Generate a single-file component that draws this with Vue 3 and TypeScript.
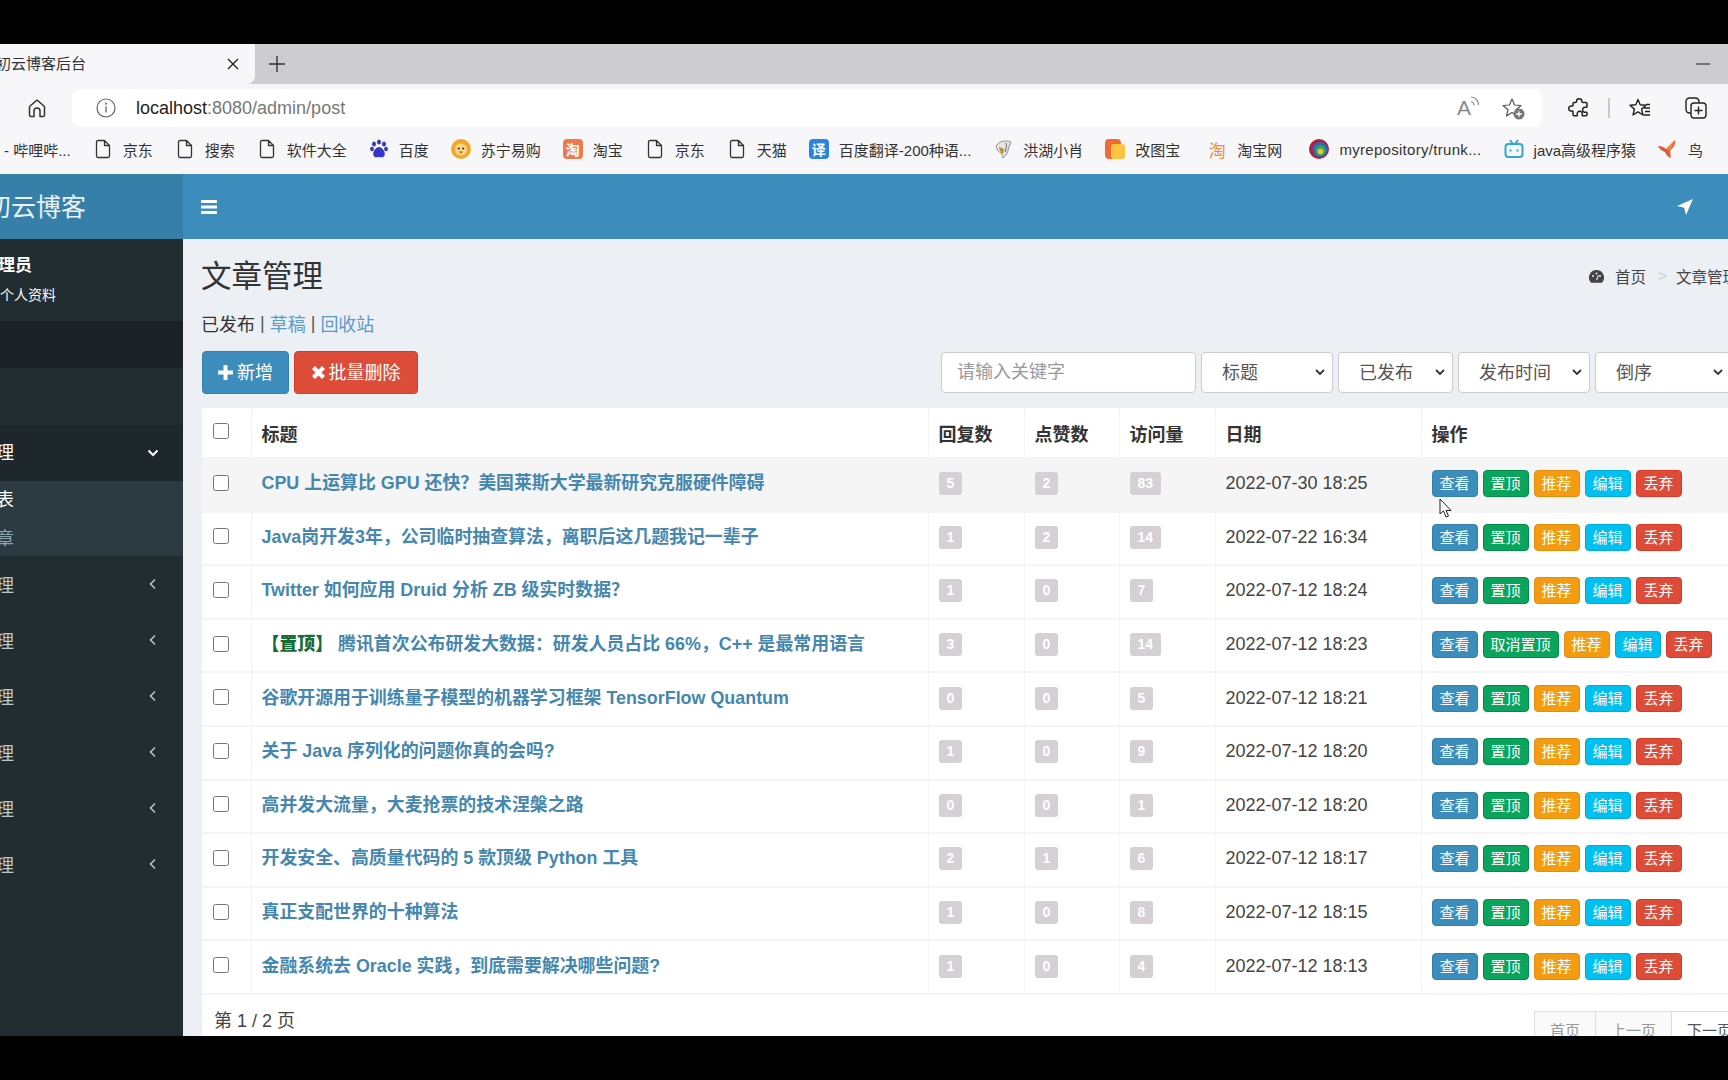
<script setup lang="ts">
type Post = {
  title: string
  pinned?: boolean
  replies: number
  likes: number
  views: number
  date: string
}

const bookmarks = [
  { icon: 'none', text: '- 哔哩哔...' },
  { icon: 'page', text: '京东' },
  { icon: 'page', text: '搜索' },
  { icon: 'page', text: '软件大全' },
  { icon: 'baidu', text: '百度' },
  { icon: 'lion', text: '苏宁易购' },
  { icon: 'taobao', text: '淘宝' },
  { icon: 'page', text: '京东' },
  { icon: 'page', text: '天猫' },
  { icon: 'fanyi', text: '百度翻译-200种语...' },
  { icon: 'hong', text: '洪湖小肖' },
  { icon: 'gaitu', text: '改图宝' },
  { icon: 'tao2', text: '淘宝网' },
  { icon: 'repo', text: 'myrepository/trunk...' },
  { icon: 'bili', text: 'java高级程序猿' },
  { icon: 'bird', text: '鸟' },
]

const menus = ['管理', '管理', '管理', '管理', '管理', '管理']

const posts: Post[] = [
  { title: 'CPU 上运算比 GPU 还快？美国莱斯大学最新研究克服硬件障碍', replies: 5, likes: 2, views: 83, date: '2022-07-30 18:25' },
  { title: 'Java岗开发3年，公司临时抽查算法，离职后这几题我记一辈子', replies: 1, likes: 2, views: 14, date: '2022-07-22 16:34' },
  { title: 'Twitter 如何应用 Druid 分析 ZB 级实时数据？', replies: 1, likes: 0, views: 7, date: '2022-07-12 18:24' },
  { title: '腾讯首次公布研发大数据：研发人员占比 66%，C++ 是最常用语言', pinned: true, replies: 3, likes: 0, views: 14, date: '2022-07-12 18:23' },
  { title: '谷歌开源用于训练量子模型的机器学习框架 TensorFlow Quantum', replies: 0, likes: 0, views: 5, date: '2022-07-12 18:21' },
  { title: '关于 Java 序列化的问题你真的会吗?', replies: 1, likes: 0, views: 9, date: '2022-07-12 18:20' },
  { title: '高并发大流量，大麦抢票的技术涅槃之路', replies: 0, likes: 0, views: 1, date: '2022-07-12 18:20' },
  { title: '开发安全、高质量代码的 5 款顶级 Python 工具', replies: 2, likes: 1, views: 6, date: '2022-07-12 18:17' },
  { title: '真正支配世界的十种算法', replies: 1, likes: 0, views: 8, date: '2022-07-12 18:15' },
  { title: '金融系统去 Oracle 实践，到底需要解决哪些问题?', replies: 1, likes: 0, views: 4, date: '2022-07-12 18:13' },
]
</script>

<template>
  <div class="screen">
    <div class="window">
      <div class="tabstrip">
        <div class="tab">
          <span class="tab-title">初云博客后台</span>
          <svg class="tab-close" width="14" height="14" viewBox="0 0 14 14"><path d="M2 2l10 10M12 2L2 12" stroke="#222" stroke-width="1.4" /></svg>
        </div>
        <svg class="tab-plus" width="20" height="20" viewBox="0 0 20 20"><path d="M10 2v16M2 10h16" stroke="#333" stroke-width="1.4" /></svg>
        <svg class="win-min" width="14" height="14" viewBox="0 0 14 14"><path d="M0 7h14" stroke="#444" stroke-width="1.3" /></svg>
      </div>

      <div class="toolbar">
        <svg class="tool-home" width="24" height="24" viewBox="0 0 24 24" fill="none" stroke="#333" stroke-width="1.5"><path d="M4.5 10.5 12 4l7.5 6.5V19a1.5 1.5 0 0 1-1.5 1.5h-3V15a3 3 0 0 0-6 0v5.500H6A1.500 1.500 0 0 1 4.500 19z" stroke-linejoin="round" /></svg>
        <div class="address">
          <svg width="22" height="22" viewBox="0 0 22 22" fill="none"><circle cx="11" cy="11" r="9" stroke="#666" stroke-width="1.2" /><path d="M11 9.500v6" stroke="#666" stroke-width="1.3" /><circle cx="11" cy="6.800" r="1" fill="#666" /></svg>
          <span class="url"><b>localhost</b>:8080/admin/post</span>
          <span class="address-gap"></span>
          <span class="read-aloud">A<svg width="10" height="14" viewBox="0 0 10 14" fill="none" stroke="#888" stroke-width="1.200"><path d="M0 6c2 0 3 1.500 3 3.500M0 1c4.500 0 7.500 3.500 7.500 8" /></svg></span>
          <svg class="addr-star" width="24" height="24" viewBox="0 0 24 24" fill="none"><path d="M11 3l2.500 6 6.500.5-5 4.200 1.500 6.300-5.500-3.400L5.500 20 7 13.700 2 9.500 8.500 9z" stroke="#555" stroke-width="1.200" stroke-linejoin="round" /><circle cx="18" cy="18" r="5.500" fill="#777" /><path d="M18 15.200v5.600M15.200 18h5.600" stroke="#fff" stroke-width="1.300" /></svg>
        </div>
        <svg class="tool-puzzle" width="24" height="24" viewBox="0 0 24 24" fill="none"><path d="M9.500 5.500a2.700 2.700 0 0 1 5.400 0c0 .6.400 1 1 1H19a1 1 0 0 1 1 1v3c0 .6-.5 1-1 .8a2.600 2.600 0 1 0 0 4.900c.5-.2 1 .2 1 .8v1.800a1 1 0 0 1-1 1h-3c-.6 0-1-.5-.8-1a2.600 2.600 0 1 0-4.900 0c.2.500-.2 1-.8 1H7a1 1 0 0 1-1-1v-3c0-.6-.5-1-1-.8a2.600 2.600 0 1 1 0-5c.5.200 1-.2 1-.8V7.500a1 1 0 0 1 1-1h1.500c.6 0 1-.4 1-1z" stroke="#222" stroke-width="1.500" /></svg>
        <span class="tool-divider"></span>
        <svg class="tool-fav" width="24" height="24" viewBox="0 0 24 24" fill="none" stroke="#222" stroke-width="1.400"><path d="M10 3.500l2.200 5.300 5.800.5-4.400 3.800 1.400 5.900-5-3.100-5 3.100 1.400-5.900-4.400-3.800 5.800-.5z" stroke-linejoin="round" /><path d="M16 12h6M17 15.500h5M15.500 19h6.500M18 8.500h4" /></svg>
        <svg class="tool-coll" width="24" height="24" viewBox="0 0 24 24" fill="none" stroke="#222" stroke-width="1.400"><rect x="7" y="7" width="15" height="15" rx="3" /><path d="M7 17H5.500A3.500 3.500 0 0 1 2 13.500v-8A3.500 3.500 0 0 1 5.500 2h6A3.500 3.500 0 0 1 15 5.500V7M14.500 10.500v8M10.500 14.500h8" /></svg>
      </div>

      <div class="bookmarks">
        <div v-for="(b, i) in bookmarks" :key="i" class="bookmark" :class="'item-' + b.icon">
          <svg v-if="b.icon === 'page'" class="bm-icon" width="20" height="20" viewBox="0 0 20 20" fill="none" stroke="#333" stroke-width="1.300"><path d="M3.500 3A1.500 1.500 0 0 1 5 1.500h6.500l5 5V17a1.500 1.500 0 0 1-1.500 1.500H5A1.500 1.500 0 0 1 3.500 17zM11.500 1.500V6.500h5" stroke-linejoin="round" /></svg>
          <svg v-else-if="b.icon === 'baidu'" class="bm-icon" width="20" height="20" viewBox="0 0 20 20" fill="#3337c6"><ellipse cx="5" cy="5" rx="2" ry="2.600" /><ellipse cx="10" cy="3" rx="2" ry="2.600" /><ellipse cx="15" cy="5" rx="2" ry="2.600" /><ellipse cx="3" cy="10" rx="1.900" ry="2.300" /><ellipse cx="17" cy="10" rx="1.900" ry="2.300" /><path d="M10 8c-3 0-5.800 4-5.800 7 0 2.500 2 3.500 3.500 3.300 1-.1 1.600-.4 2.300-.4s1.300.3 2.300.4c1.500.2 3.500-.8 3.500-3.300 0-3-2.800-7-5.800-7z" /></svg>
          <svg v-else-if="b.icon === 'lion'" class="bm-icon" width="20" height="20" viewBox="0 0 20 20"><circle cx="10" cy="10" r="10" fill="#f2a92a" /><circle cx="10" cy="10.500" r="6" fill="#f9d58a" /><circle cx="7.800" cy="9.500" r="1.100" fill="#4a2c10" /><circle cx="12.200" cy="9.500" r="1.100" fill="#4a2c10" /><path d="M8 12.500h4l-2 2z" fill="#a9521c" /></svg>
          <span v-else-if="b.icon === 'taobao'" class="bm-icon bm-tao">淘</span>
          <span v-else-if="b.icon === 'fanyi'" class="bm-icon bm-fanyi">译</span>
          <svg v-else-if="b.icon === 'hong'" class="bm-icon" width="20" height="20" viewBox="0 0 20 20"><path d="M3 7c2-3 5-5 9-5 2 0 4 0 6 1-1 3-3 6-3 9-1 3-3 5-5 7-1-2-1-3-1-5-3 0-5-3-6-7z" fill="#e7e5e0" stroke="#777" stroke-width=".8" /><path d="M6 8l5 2-1 5-3-3z" fill="#b99127" /><path d="M13 4c1 3 0 6-1 9" stroke="#666" stroke-width="1" fill="none" /></svg>
          <svg v-else-if="b.icon === 'gaitu'" class="bm-icon" width="20" height="20" viewBox="0 0 20 20"><rect y="0" width="16" height="20" rx="4" fill="#ee6c33" /><rect x="6" y="5" width="14" height="15" rx="3" fill="#fbc440" /></svg>
          <span v-else-if="b.icon === 'tao2'" class="bm-icon bm-tao2">淘</span>
          <svg v-else-if="b.icon === 'repo'" class="bm-icon" width="20" height="20" viewBox="0 0 20 20"><circle cx="10" cy="10" r="10" fill="#b21f3d" /><circle cx="11" cy="10.500" r="7.500" fill="#2a6db8" /><circle cx="11.500" cy="11.500" r="5.200" fill="#3aa655" /><circle cx="11.500" cy="12.500" r="2.800" fill="#e8c93c" /></svg>
          <svg v-else-if="b.icon === 'bili'" class="bm-icon" width="20" height="20" viewBox="0 0 20 20" fill="none" stroke="#2fa9cf" stroke-width="2"><rect x="1.500" y="5" width="17" height="13" rx="3" /><path d="M6 1l2.500 3.500M14 1l-2.500 3.500" /><path d="M6.500 10.500v2M13.500 10.500v2" /></svg>
          <svg v-else-if="b.icon === 'bird'" class="bm-icon" width="20" height="20" viewBox="0 0 20 20"><path d="M0 7c3 0 6 1 8 3l9-9c1 4-2 8-5 11l1 7c-3-1-5-3-6-6C4 12 1 10 0 7z" fill="#e2583a" /><path d="M8 10l4 2 5-11z" fill="#f08a3c" /></svg>
          <span class="bm-text">{{ b.text }}</span>
        </div>
      </div>

      <div class="app">
        <aside class="sidebar">
          <div class="logo"><span>初云博客</span></div>
          <div class="user">
            <strong>管理员</strong>
            <span>修改个人资料</span>
          </div>
          <div class="search-band"></div>
          <div class="menu-blank"></div>
          <div class="menu-item active">
            <span class="menu-label">管理</span>
            <svg width="12" height="12" viewBox="0 0 12 12" fill="none" stroke="#fff" stroke-width="2"><path d="M1.500 3.500 6 8l4.500-4.500" /></svg>
          </div>
          <div class="submenu">
            <div class="sub-item on"><span class="menu-label">列表</span></div>
            <div class="sub-item"><span class="menu-label">文章</span></div>
          </div>
          <div v-for="(m, i) in menus" :key="i" class="menu-item">
            <span class="menu-label">{{ m }}</span>
            <svg width="12" height="12" viewBox="0 0 12 12" fill="none" stroke="#b8c7ce" stroke-width="1.500"><path d="M8 1.500 3.500 6 8 10.500" /></svg>
          </div>
        </aside>

        <div class="main">
          <header class="navbar">
            <svg width="16" height="14" viewBox="0 0 16 14" fill="#fff"><rect width="16" height="3" rx=".6" /><rect y="5.500" width="16" height="3" rx=".6" /><rect y="11" width="16" height="3" rx=".6" /></svg>
            <svg class="nav-arrow" width="16" height="16" viewBox="0 0 16 16" fill="#fff"><path d="M16 0 9 16 7.200 8.800 0 7z" /></svg>
          </header>

          <section class="content">
            <div class="page-head">
              <h1>文章管理</h1>
              <div class="crumbs">
                <svg width="15" height="13" viewBox="0 0 15 13"><path d="M7.500 0a7.500 7.500 0 0 0-6 12l.6.800h10.800l.6-.8A7.500 7.500 0 0 0 7.500 0z" fill="#444" /><circle cx="4" cy="6" r="1" fill="#ecf0f5" /><circle cx="7.500" cy="3.500" r="1" fill="#ecf0f5" /><circle cx="11" cy="6" r="1" fill="#ecf0f5" /><path d="M7 10l2-5 .8.300-1.600 5z" fill="#ecf0f5" /></svg>
                <span class="crumb-link">首页</span>
                <span class="crumb-sep">&gt;</span>
                <span class="crumb-link">文章管理</span>
              </div>
            </div>

            <div class="status-tabs">
              <span>已发布</span><i>|</i><a>草稿</a><i>|</i><a>回收站</a>
            </div>

            <div class="actions">
              <div class="action-btns">
                <button class="btn btn-add" type="button">
                  <svg width="15" height="15" viewBox="0 0 15 15" fill="#fff"><path d="M5.500 0h4v5.500H15v4H9.500V15h-4V9.500H0v-4h5.500z" /></svg>
                  新增
                </button>
                <button class="btn btn-del" type="button">
                  <svg width="13" height="13" viewBox="0 0 13 13" fill="#fff"><path d="M3 0l3.500 3.500L10 0l3 3-3.500 3.500L13 10l-3 3-3.500-3.500L3 13l-3-3 3.500-3.500L0 3z" /></svg>
                  批量删除
                </button>
              </div>
              <div class="filters">
                <input class="keyword" type="text" placeholder="请输入关键字" />
                <select class="sel sel-a"><option>标题</option></select>
                <select class="sel sel-b"><option>已发布</option></select>
                <select class="sel sel-c"><option>发布时间</option></select>
                <select class="sel sel-d"><option>倒序</option></select>
              </div>
            </div>

            <div class="panel">
              <table class="posts">
                <colgroup>
                  <col style="width: 49px" />
                  <col style="width: 677px" />
                  <col style="width: 96px" />
                  <col style="width: 95px" />
                  <col style="width: 96px" />
                  <col style="width: 206px" />
                  <col />
                </colgroup>
                <thead>
                  <tr>
                    <th><input class="head-check" type="checkbox" /></th>
                    <th>标题</th>
                    <th>回复数</th>
                    <th>点赞数</th>
                    <th>访问量</th>
                    <th>日期</th>
                    <th>操作</th>
                  </tr>
                </thead>
                <tbody>
                  <tr v-for="(p, i) in posts" :key="i" :class="{ hover: i === 0 }">
                    <td><input type="checkbox" /></td>
                    <td class="title">
                      <b v-if="p.pinned" class="pin">【置顶】</b><a>{{ p.title }}</a>
                    </td>
                    <td><span class="badge">{{ p.replies }}</span></td>
                    <td><span class="badge">{{ p.likes }}</span></td>
                    <td><span class="badge">{{ p.views }}</span></td>
                    <td class="date">{{ p.date }}</td>
                    <td>
                      <div class="ops">
                        <button class="op c-blue" type="button">查看</button>
                        <button class="op c-green" type="button">{{ p.pinned ? '取消置顶' : '置顶' }}</button>
                        <button class="op c-orange" type="button">推荐</button>
                        <button class="op c-cyan" type="button">编辑</button>
                        <button class="op c-red" type="button">丢弃</button>
                      </div>
                    </td>
                  </tr>
                </tbody>
              </table>
              <div class="panel-foot">
                <span class="page-info">第 1 / 2 页</span>
                <div class="pager">
                  <span class="off">首页</span>
                  <span class="off">上一页</span>
                  <span>下一页</span>
                  <span>末页</span>
                </div>
              </div>
            </div>
          </section>
        </div>
      </div>
    </div>

    <svg class="cursor" width="14" height="21" viewBox="0 0 14 21"><path d="M1 1v15l3.500-3.200L7 19l2.500-1-2.500-5.500h5z" fill="#fff" stroke="#222" stroke-width="1" /></svg>
  </div>
</template>

<style>
html,
body {
  margin: 0;
  background: #000;
}
</style>

<style scoped>
.screen {
  position: relative;
  width: 1728px;
  height: 1080px;
  padding: 44px 0;
  box-sizing: border-box;
  background: #000;
  overflow: hidden;
  font-family: "Liberation Sans", "Noto Sans CJK SC", sans-serif;
  color: #333;
}
.window {
  height: 100%;
  display: flex;
  flex-direction: column;
  overflow: hidden;
  background: #f7f6f9;
}

/* browser chrome */
.tabstrip {
  height: 40px;
  flex: none;
  display: flex;
  align-items: center;
  background: #cdccce;
}
.tab {
  width: 255px;
  height: 100%;
  flex: none;
  display: flex;
  align-items: center;
  justify-content: space-between;
  padding-right: 15px;
  box-sizing: border-box;
  background: #f7f6f9;
  border-bottom-right-radius: 8px;
}
.tab-title {
  margin-left: -4px;
  padding-bottom: 4px;
  font-size: 15px;
  color: #333;
}
.tab-plus {
  margin-left: 12px;
}
.win-min {
  margin-left: auto;
  margin-right: 18px;
}
.toolbar {
  height: 48px;
  flex: none;
  display: flex;
  align-items: center;
  padding-left: 25px;
}
.address {
  width: 1470px;
  height: 38px;
  margin-left: 23px;
  padding: 0 17px 0 23px;
  box-sizing: border-box;
  flex: none;
  display: flex;
  align-items: center;
  background: #fff;
  border-radius: 7px;
}
.url {
  margin-left: 19px;
  font-size: 18px;
  color: #777;
}
.url b {
  font-weight: 400;
  color: #222;
}
.address-gap {
  flex: 1;
}
.read-aloud {
  width: 24px;
  margin-right: -2px;
  display: flex;
  align-items: flex-start;
  font-size: 21px;
  color: #888;
}
.addr-star {
  margin-left: 22px;
}
.tool-puzzle {
  margin-left: 25px;
}
.tool-divider {
  width: 2px;
  height: 20px;
  margin-left: 17px;
  background: #c9c9cb;
}
.tool-fav {
  margin-left: 18px;
}
.tool-coll {
  margin-left: 32px;
}
.bookmarks {
  height: 42px;
  flex: none;
  display: flex;
  align-items: center;
  gap: 22px;
  padding: 0 0 8px 4px;
  box-sizing: border-box;
  white-space: nowrap;
}
.bookmark {
  display: flex;
  align-items: center;
  gap: 10px;
  font-size: 15px;
  color: #333;
}
.item-tao2 {
  margin-left: 5px;
}
.item-repo {
  margin-left: 5px;
  letter-spacing: 0.3px;
}
.bm-icon {
  width: 20px;
  height: 20px;
  flex: none;
}
.bm-tao,
.bm-fanyi {
  display: flex;
  align-items: center;
  justify-content: center;
  border-radius: 4px;
  font-size: 14px;
  font-weight: 700;
  color: #fff;
}
.bm-tao {
  background: #ec7a4c;
}
.bm-fanyi {
  background: #2a83e0;
}
.bm-tao2 {
  display: flex;
  align-items: center;
  justify-content: center;
  font-size: 17px;
  color: #f08a3c;
}

/* admin page */
.app {
  flex: 1;
  display: flex;
  min-height: 0;
}
.sidebar {
  width: 183px;
  flex: none;
  overflow: hidden;
  background: #222d32;
  color: #b8c7ce;
}
.logo {
  height: 65px;
  box-sizing: border-box;
  padding-bottom: 4px;
  display: flex;
  align-items: center;
  background: #367fa9;
  color: #eaf3f8;
  font-size: 25px;
}
.logo span {
  margin-left: -14px;
}
.user {
  height: 82px;
  box-sizing: border-box;
  padding-top: 15px;
  display: flex;
  flex-direction: column;
  gap: 8px;
  color: #fff;
  white-space: nowrap;
}
.user strong {
  margin-left: -19px;
  font-size: 17px;
  line-height: 24px;
}
.user span {
  margin-left: -28px;
  font-size: 14px;
  line-height: 18px;
}
.search-band {
  height: 47px;
  background: #1a2226;
}
.menu-blank {
  height: 57px;
}
.menu-item {
  height: 56px;
  display: flex;
  align-items: center;
  justify-content: space-between;
  padding-right: 24px;
  font-size: 18px;
}
.menu-item.active {
  background: #1e282c;
  color: #fff;
}
.menu-item.active .menu-label,
.sub-item.on .menu-label {
  padding-bottom: 4px;
}
.menu-label {
  margin-left: -22px;
  white-space: nowrap;
}
.submenu {
  height: 75px;
  background: #2c3b41;
  color: #8aa4af;
  font-size: 18px;
}
.sub-item {
  height: 37.5px;
  display: flex;
  align-items: center;
}
.sub-item.on {
  color: #fff;
}
.main {
  flex: 1;
  min-width: 0;
  display: flex;
  flex-direction: column;
  background: #ecf0f5;
}
.navbar {
  height: 65px;
  flex: none;
  display: flex;
  align-items: center;
  justify-content: space-between;
  padding: 0 35px 0 18px;
  background: #3c8dbc;
}
.content {
  flex: 1;
  min-height: 0;
  padding: 20px 0 0 19px;
  overflow: hidden;
}
.page-head {
  width: 1536px;
  display: flex;
  align-items: center;
  justify-content: space-between;
}
h1 {
  margin: 0 0 0 -1px;
  font-size: 30.5px;
  font-weight: 400;
  line-height: 34px;
  color: #333;
}
.crumbs {
  display: flex;
  align-items: center;
  font-size: 15.500px;
  color: #444;
  white-space: nowrap;
}
.crumb-link:first-of-type {
  margin-left: 11px;
}
.crumb-sep {
  margin: 0 9px 0 12px;
  color: #ccc;
}
.status-tabs {
  margin: 16px 0 0 -1px;
  display: flex;
  align-items: center;
  height: 28px;
  font-size: 18px;
  color: #333;
}
.status-tabs i {
  margin: 0 5px;
  font-style: normal;
  color: #555;
}
.status-tabs a {
  color: #5b9bc6;
}
.actions {
  width: 1529px;
  margin-top: 14px;
  display: flex;
  align-items: center;
  justify-content: space-between;
}
.action-btns,
.filters {
  display: flex;
  align-items: center;
  gap: 5px;
}
.btn {
  height: 43px;
  padding: 0 0 4px;
  display: flex;
  align-items: center;
  justify-content: center;
  gap: 4px;
  border: 1px solid;
  border-radius: 4px;
  font-family: inherit;
  font-size: 18px;
  color: #fff;
}
.btn svg {
  margin-top: 4px;
}
.btn-add {
  width: 87px;
  background: #3c8dbc;
  border-color: #367fa9;
}
.btn-del {
  width: 124px;
  background: #dd4b39;
  border-color: #d73925;
}
.keyword,
.sel {
  height: 41px;
  box-sizing: border-box;
  background-color: #fff;
  border: 1px solid #ccc;
  border-radius: 4px;
  font-family: inherit;
  font-size: 18px;
  color: #555;
  outline: none;
}
.keyword {
  width: 255px;
  padding: 0 15px;
}
.keyword::placeholder {
  color: #999;
}
.sel {
  appearance: none;
  padding: 0 0 0 20px;
  background-image: url("data:image/svg+xml,%3Csvg xmlns='http://www.w3.org/2000/svg' width='10' height='7' viewBox='0 0 10 7' fill='none' stroke='%23333' stroke-width='1.800'%3E%3Cpath d='M1 1l4 4 4-4'/%3E%3C/svg%3E");
  background-repeat: no-repeat;
  background-position: right 7px center;
}
.sel-a {
  width: 132px;
}
.sel-b {
  width: 115px;
}
.sel-c {
  width: 132px;
}
.sel-d {
  width: 136px;
}
.panel {
  width: 1619px;
  margin-top: 14px;
  background: #fff;
  padding-bottom: 30px;
}
.posts {
  width: 100%;
  table-layout: fixed;
  border-collapse: collapse;
  font-size: 18px;
}
th,
td {
  padding: 0 10px;
  text-align: left;
  border: 1px solid #f4f4f4;
  border-top: 0;
}
th {
  height: 49px;
  border-bottom-width: 2px;
  font-weight: 700;
  color: #333;
}
td {
  box-sizing: border-box;
  height: 53.600px;
  padding-bottom: 2px;
  border-bottom-width: 2px;
}
tr > :first-child {
  border-left: 0;
  padding-left: 11px;
}
td:first-child {
  padding-bottom: 4px;
}
tr.hover td {
  background: #f5f5f6;
}
input[type='checkbox'] {
  display: block;
  width: 16px;
  height: 16px;
  margin: 0;
}
.head-check {
  position: relative;
  top: -2px;
}
td.title {
  padding-bottom: 7px;
  white-space: nowrap;
  font-size: 17.900px;
  font-weight: 700;
  color: #4587ae;
}
.pin {
  margin-right: 5px;
  color: #186b35;
}
.badge {
  display: inline-block;
  height: 23px;
  padding: 0 8px;
  border-radius: 3px;
  background: #d5d0d3;
  color: #fff;
  font-size: 14px;
  font-weight: 700;
  line-height: 23px;
  vertical-align: middle;
}
.date {
  color: #444;
}
.ops {
  display: flex;
  gap: 5px;
}
.op {
  height: 27px;
  padding: 0 7px;
  border: 1px solid transparent;
  border-radius: 4px;
  font-family: inherit;
  font-size: 15px;
  line-height: 25px;
  color: #fff;
  white-space: nowrap;
}
.c-blue {
  background: #3c8dbc;
  border-color: #367fa9;
}
.c-green {
  background: #0aa45d;
  border-color: #008d4c;
}
.c-orange {
  background: #f39c12;
  border-color: #e08e0b;
}
.c-cyan {
  background: #00c0ef;
  border-color: #00acd6;
}
.c-red {
  background: #dd4b39;
  border-color: #d73925;
}
.panel-foot {
  height: 40px;
  display: flex;
  align-items: flex-start;
  justify-content: space-between;
  padding: 14px 12px 0 12px;
  font-size: 18px;
  color: #444;
}
.page-info {
  line-height: 24px;
}
.pager {
  display: flex;
  margin-top: 2px;
}
.pager span {
  height: 36px;
  padding: 0 15px;
  display: flex;
  align-items: center;
  border: 1px solid #ddd;
  margin-left: -1px;
  font-size: 15px;
  color: #555;
  background: #fff;
}
.pager .off {
  color: #999;
  background: #fafafa;
}
.cursor {
  position: absolute;
  left: 1439px;
  top: 498px;
}
</style>
